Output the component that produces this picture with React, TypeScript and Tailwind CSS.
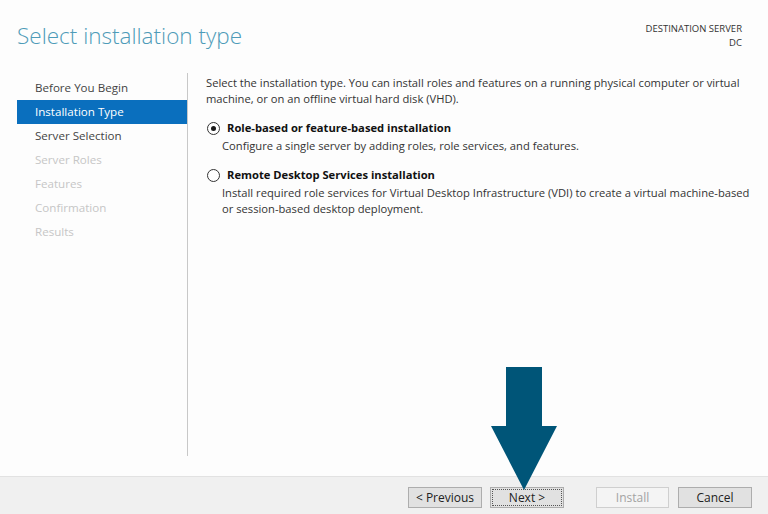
import React from 'react';

const steps = [
  { label: 'Before You Begin', state: 'done' },
  { label: 'Installation Type', state: 'active' },
  { label: 'Server Selection', state: 'done' },
  { label: 'Server Roles', state: 'off' },
  { label: 'Features', state: 'off' },
  { label: 'Confirmation', state: 'off' },
  { label: 'Results', state: 'off' },
];

function Radio({ checked }: { checked: boolean }) {
  return (
    <span className="flex h-[13px] w-[13px] items-center justify-center rounded-full border border-[#333] bg-white">
      {checked && <span className="h-[5px] w-[5px] rounded-full bg-[#1a1a1a]" />}
    </span>
  );
}

export default function App() {
  return (
    <div className="relative flex h-[514px] w-[768px] flex-col overflow-hidden bg-[#fdfdfd] text-[#333] [font-family:'Open_Sans','Noto_Sans',sans-serif]">
      {/* Header */}
      <div className="flex items-start justify-between pl-[17px] pr-[26px] pt-[20px]">
        <h1 className="text-[22.5px] font-light leading-[32px] text-[#4e9bb8]">Select installation type</h1>
        <div className="pt-[2px] text-right text-[9.5px] leading-[14px] text-[#333]">
          <div>DESTINATION SERVER</div>
          <div>DC</div>
        </div>
      </div>

      {/* Body */}
      <div className="flex flex-1 pt-[21px]">
        <div className="w-[187px] pl-[17px] pt-[3px]">
          {steps.map((s) => (
            <div
              key={s.label}
              className={`h-[24px] pl-[18px] text-[11.6px] leading-[24px] ${
                s.state === 'active'
                  ? 'bg-[#0a6fbe] text-white'
                  : s.state === 'done'
                  ? 'text-[#444]'
                  : 'text-[#c6c6c6]'
              }`}
            >
              {s.label}
            </div>
          ))}
        </div>
        <div className="mb-[20px] w-px bg-[#c8c8c8]" />
        <div className="flex-1 pl-[18px] pr-[8px] pt-[2px] text-[11.2px] leading-[16px]">
          <p className="pr-[12px]">
            Select the installation type. You can install roles and features on a running physical computer or virtual
            machine, or on an offline virtual hard disk (VHD).
          </p>

          <div className="mt-[13px]">
            <div className="flex items-center gap-[7px] pl-[1px]">
              <Radio checked />
              <span className="font-bold text-[#111]">Role-based or feature-based installation</span>
            </div>
            <p className="mt-[2px] pl-[16px]">Configure a single server by adding roles, role services, and features.</p>
          </div>

          <div className="mt-[13px]">
            <div className="flex items-center gap-[7px] pl-[1px]">
              <Radio checked={false} />
              <span className="font-bold text-[#111]">Remote Desktop Services installation</span>
            </div>
            <p className="mt-[2px] pl-[16px]">
              Install required role services for Virtual Desktop Infrastructure (VDI) to create a virtual machine-based
              or session-based desktop deployment.
            </p>
          </div>
        </div>
      </div>

      {/* Footer */}
      <div className="flex h-[38px] items-start border-t border-[#e2e2e2] bg-[#f0f0f0] pt-[10px] text-[12px]">
        <div className="ml-[408px] flex gap-[8px]">
          <button className="h-[21px] w-[74px] border border-[#adadad] bg-[#e1e1e1] leading-[19px] text-[#222]">&lt; Previous</button>
          <button className="h-[21px] w-[74px] border border-[#adadad] bg-[#e1e1e1] p-[1px] leading-[15px] text-[#222]">
            <span className="block h-full w-full border border-dotted border-[#555]">Next &gt;</span>
          </button>
        </div>
        <div className="ml-[32px] flex gap-[9px]">
          <button className="h-[21px] w-[73px] border border-[#cfcfcf] bg-[#f4f4f4] leading-[19px] text-[#a3a3a3]">Install</button>
          <button className="h-[21px] w-[74px] border border-[#adadad] bg-[#e1e1e1] leading-[19px] text-[#222]">Cancel</button>
        </div>
      </div>

      {/* Annotation arrow */}
      <svg className="absolute left-[490px] top-[366px]" width="68" height="126" viewBox="0 0 68 126">
        <path d="M16 1 H52 V60 H67 L34 124 L1 60 H16 Z" fill="#005578" />
      </svg>
    </div>
  );
}
